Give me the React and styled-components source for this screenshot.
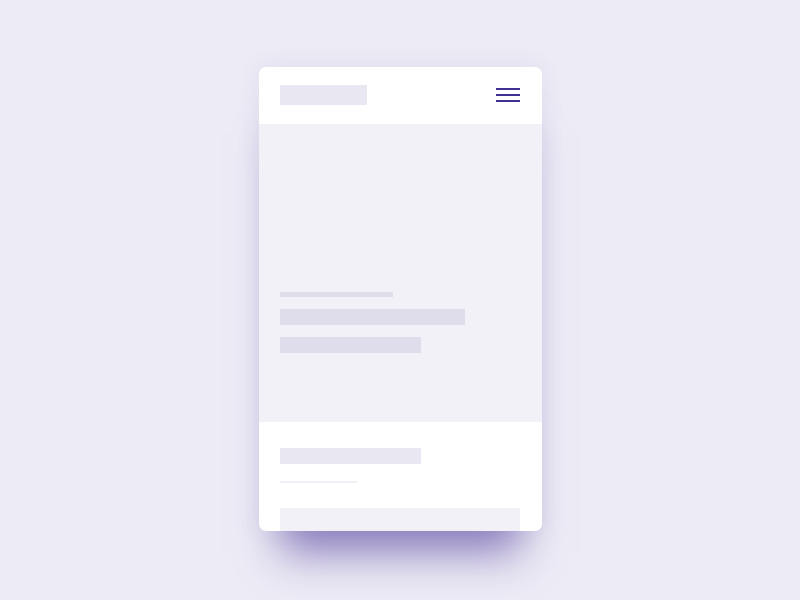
import React from 'react';
import styled, { createGlobalStyle } from 'styled-components';

const GlobalStyle = createGlobalStyle`
  html, body {
    margin: 0;
    padding: 0;
    background: #edebf5;
    font-family: "Inter", "Liberation Sans", sans-serif;
  }
`;

const Page = styled.div`
  width: 800px;
  height: 600px;
  display: flex;
  justify-content: center;
  align-items: flex-start;
  padding-top: 67px;
  box-sizing: border-box;
  overflow: hidden;
`;

const Phone = styled.div`
  width: 283px;
  height: 464px;
  background: #fff;
  border-radius: 7px;
  overflow: hidden;
  display: flex;
  flex-direction: column;
  box-shadow:
    0 0 24px rgba(90, 70, 170, 0.08),
    0 44px 40px -22px rgba(70, 50, 150, 0.58);
`;

const Header = styled.header`
  height: 57px;
  flex-shrink: 0;
  display: flex;
  align-items: center;
  justify-content: space-between;
  padding: 0 22px 0 21px;
`;

const Logo = styled.div`
  width: 87px;
  height: 20px;
  margin-top: -1px;
  background: #e9e7f2;
`;

const Burger = styled.button`
  width: 24px;
  height: 14px;
  padding: 0;
  border: 0;
  background: none;
  display: flex;
  flex-direction: column;
  justify-content: space-between;
  margin-top: -1px;

  span {
    display: block;
    height: 2px;
    background: #3f3194;
  }
`;

const Hero = styled.section`
  height: 298px;
  flex-shrink: 0;
  background: #f2f1f8;
  display: flex;
  flex-direction: column;
  justify-content: flex-end;
  padding: 0 21px 69px;
  box-sizing: border-box;
`;

const Bar = styled.div`
  width: ${p => p.$w}px;
  height: ${p => p.$h}px;
  margin-top: ${p => p.$gap || 0}px;
  background: ${p => p.$color || '#dfdcec'};
`;

const Content = styled.section`
  padding: 26px 21px 0;
  display: flex;
  flex-direction: column;
`;

const Block = styled.div`
  width: 240px;
  height: 40px;
  margin-top: 25px;
  background: #f2f1f8;
`;

const App = () => {
  return (
    <>
      <GlobalStyle />
      <Page>
        <Phone>
          <Header>
            <Logo />
            <Burger aria-label="menu">
              <span />
              <span />
              <span />
            </Burger>
          </Header>
          <Hero>
            <Bar $w={113} $h={5} />
            <Bar $w={185} $h={16} $gap={12} />
            <Bar $w={141} $h={16} $gap={12} />
          </Hero>
          <Content>
            <Bar $w={141} $h={16} $color="#e9e7f2" />
            <Bar $w={77} $h={2} $gap={17} $color="#f1f0f6" />
            <Block />
          </Content>
        </Phone>
      </Page>
    </>
  );
};

export default App;
